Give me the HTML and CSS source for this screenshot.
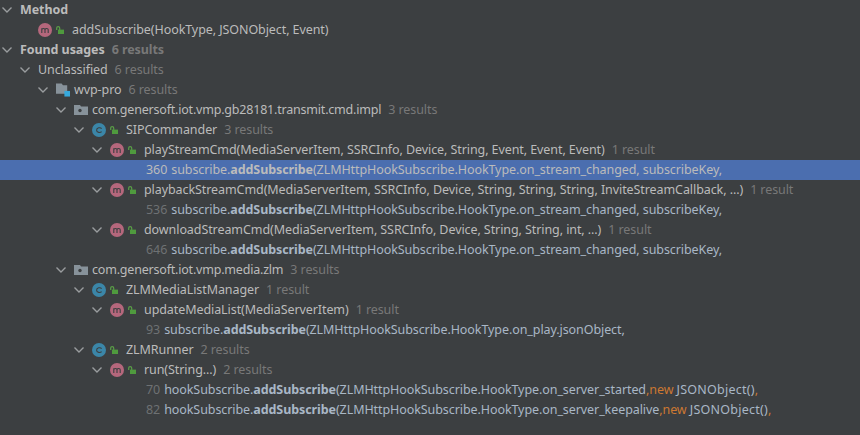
FILE: index.html
```html
<!DOCTYPE html>
<html lang="en">
<head>
<meta charset="utf-8">
<title>Find usages</title>
<link rel="stylesheet" href="styles.css">
</head>
<body>
<svg class="defs" width="0" height="0" aria-hidden="true">
  <defs>
    <symbol id="chev" viewBox="0 0 14 14"><path d="M2.5 4.5 7 9l4.5-4.5" fill="none" stroke="#9a9d9f" stroke-width="1.4"/></symbol>
    <symbol id="m" viewBox="0 0 14 14"><circle cx="7" cy="7" r="7" fill="#b5677c"/><path d="M3.8 10V5.2M3.8 6.4C4.4 5.2 6.8 5 7 6.6V10M7 6.4C7.6 5.2 10.2 5 10.2 6.8V10" fill="none" stroke="#3c3f41" stroke-width="1.1"/></symbol>
    <symbol id="c" viewBox="0 0 14 14"><circle cx="7" cy="7" r="7" fill="#3b86a8"/><path d="M9.6 5.6C8.4 4 4.6 4.6 4.6 7.2S8.4 10 9.6 8.6" fill="none" stroke="#3c3f41" stroke-width="1.1"/></symbol>
    <symbol id="lock" viewBox="0 0 8 8"><path d="M.7 4V2C.7.2 3.7.2 3.7 2V4" fill="none" stroke="#5a9e47" stroke-width="1.2"/><rect x="2" y="3.6" width="6" height="4.4" fill="#4f9a3e"/></symbol>
    <symbol id="pkg" viewBox="0 0 14 14"><path d="M0 2h6l1 1.5h7V12H0z" fill="#87929a"/><circle cx="6" cy="7.5" r="1.7" fill="#3c3f41"/></symbol>
    <symbol id="mod" viewBox="0 0 15 14"><path d="M0 0h6l1.5 2H12v9H0z" fill="#87929a"/><rect x="9" y="8" width="6" height="6" fill="#36a9dd"/></symbol>
  </defs>
</svg>
<div class="tree">
  <div class="row d0 head"><svg class="chev"><use href="#chev"/></svg><span class="t">Method</span></div>
  <div class="row d1 usage-top"><span class="slot"></span><svg class="ico"><use href="#m"/></svg><svg class="lock"><use href="#lock"/></svg><span class="t">addSubscribe(HookType, JSONObject, Event)</span></div>
  <div class="row d0 head"><svg class="chev"><use href="#chev"/></svg><span class="t">Found usages</span><span class="t count">6 results</span></div>
  <div class="row d1"><svg class="chev"><use href="#chev"/></svg><span class="t">Unclassified</span><span class="t count">6 results</span></div>
  <div class="row d2"><svg class="chev"><use href="#chev"/></svg><svg class="ico"><use href="#mod"/></svg><span class="t after-ico">wvp-pro</span><span class="t count">6 results</span></div>
  <div class="row d3"><svg class="chev"><use href="#chev"/></svg><svg class="ico"><use href="#pkg"/></svg><span class="t after-ico pkg-name">com.genersoft.iot.vmp.gb28181.transmit.cmd.impl</span><span class="t count">3 results</span></div>
  <div class="row d4"><svg class="chev"><use href="#chev"/></svg><svg class="ico"><use href="#c"/></svg><svg class="lock"><use href="#lock"/></svg><span class="t">SIPCommander</span><span class="t count">3 results</span></div>
  <div class="row d5"><svg class="chev"><use href="#chev"/></svg><svg class="ico"><use href="#m"/></svg><svg class="lock"><use href="#lock"/></svg><span class="t">playStreamCmd(MediaServerItem, SSRCInfo, Device, String, Event, Event, Event)</span><span class="t count">1 result</span></div>
  <div class="row d6 selected"><span class="slot"></span><span class="t num">360</span><span class="t code">subscribe.<b>addSubscribe</b>(ZLMHttpHookSubscribe.HookType.on_stream_changed, subscribeKey,</span></div>
  <div class="row d5"><svg class="chev"><use href="#chev"/></svg><svg class="ico"><use href="#m"/></svg><svg class="lock"><use href="#lock"/></svg><span class="t">playbackStreamCmd(MediaServerItem, SSRCInfo, Device, String, String, String, InviteStreamCallback, ...)</span><span class="t count">1 result</span></div>
  <div class="row d6"><span class="slot"></span><span class="t num">536</span><span class="t code">subscribe.<b>addSubscribe</b>(ZLMHttpHookSubscribe.HookType.on_stream_changed, subscribeKey,</span></div>
  <div class="row d5"><svg class="chev"><use href="#chev"/></svg><svg class="ico"><use href="#m"/></svg><svg class="lock"><use href="#lock"/></svg><span class="t">downloadStreamCmd(MediaServerItem, SSRCInfo, Device, String, String, int, ...)</span><span class="t count">1 result</span></div>
  <div class="row d6"><span class="slot"></span><span class="t num">646</span><span class="t code">subscribe.<b>addSubscribe</b>(ZLMHttpHookSubscribe.HookType.on_stream_changed, subscribeKey,</span></div>
  <div class="row d3"><svg class="chev"><use href="#chev"/></svg><svg class="ico"><use href="#pkg"/></svg><span class="t after-ico pkg-name">com.genersoft.iot.vmp.media.zlm</span><span class="t count">3 results</span></div>
  <div class="row d4"><svg class="chev"><use href="#chev"/></svg><svg class="ico"><use href="#c"/></svg><svg class="lock"><use href="#lock"/></svg><span class="t">ZLMMediaListManager</span><span class="t count">1 result</span></div>
  <div class="row d5"><svg class="chev"><use href="#chev"/></svg><svg class="ico"><use href="#m"/></svg><svg class="lock"><use href="#lock"/></svg><span class="t">updateMediaList(MediaServerItem)</span><span class="t count">1 result</span></div>
  <div class="row d6"><span class="slot"></span><span class="t num">93</span><span class="t code">subscribe.<b>addSubscribe</b>(ZLMHttpHookSubscribe.HookType.on_play.jsonObject,</span></div>
  <div class="row d4"><svg class="chev"><use href="#chev"/></svg><svg class="ico"><use href="#c"/></svg><svg class="lock"><use href="#lock"/></svg><span class="t">ZLMRunner</span><span class="t count">2 results</span></div>
  <div class="row d5"><svg class="chev"><use href="#chev"/></svg><svg class="ico"><use href="#m"/></svg><svg class="lock"><use href="#lock"/></svg><span class="t">run(String...)</span><span class="t count">2 results</span></div>
  <div class="row d6"><span class="slot"></span><span class="t num">70</span><span class="t code">hookSubscribe.<b>addSubscribe</b>(ZLMHttpHookSubscribe.HookType.on_server_started<u>,</u><i>new</i> <span class="obj">JSONObject()</span><u>,</u></span></div>
  <div class="row d6"><span class="slot"></span><span class="t num">82</span><span class="t code">hookSubscribe.<b>addSubscribe</b>(ZLMHttpHookSubscribe.HookType.on_server_keepalive<u>,</u><i>new</i> <span class="obj">JSONObject()</span><u>,</u></span></div>
</div>
</body>
</html>
```
FILE: styles.css
```css
html, body {
  margin: 0;
  padding: 0;
  background: #3c3f41;
  height: 100%;
  overflow: hidden;
}
.defs { display: block; height: 0; }
.tree {
  font-family: "Noto Sans", "Open Sans", sans-serif;
  font-size: 12.5px;
  letter-spacing: -0.08px;
  color: #bbbbbb;
  display: flex;
  flex-direction: column;
}
.row {
  height: 20px;
  display: flex;
  align-items: center;
  white-space: nowrap;
}
.t { line-height: 18px; margin-top: 1px; margin-bottom: 2px; }
.d0 { padding-left: 0; }
.d1 { padding-left: 18px; }
.d2 { padding-left: 36px; }
.d3 { padding-left: 54px; }
.d4 { padding-left: 72px; }
.d5 { padding-left: 90px; }
.d6 { padding-left: 126px; }
.head { font-weight: 700; }
.count { color: #787878; margin-left: 7px; }
.chev { width: 14px; height: 14px; margin-right: 6px; flex: none; }
.slot { width: 20px; flex: none; }
.ico { width: 14px; height: 14px; flex: none; }
.lock { width: 8px; height: 8px; margin: 0 8px 0 4px; flex: none; }
.after-ico { margin-left: 4px; }
.pkg-name { letter-spacing: -0.2px; }
.num { color: #6e7173; margin-right: 4px; }
.code { color: #a9b7c6; }
.code b { font-weight: 700; }
.code i { font-style: normal; color: #cc7832; }
.code u { text-decoration: none; color: #cc7832; }
.obj { letter-spacing: 0.25px; }
.selected { background: #4b6eaf; }
.selected .num { color: #bbbbbb; }
.selected .code { color: #bbbbbb; }
```
